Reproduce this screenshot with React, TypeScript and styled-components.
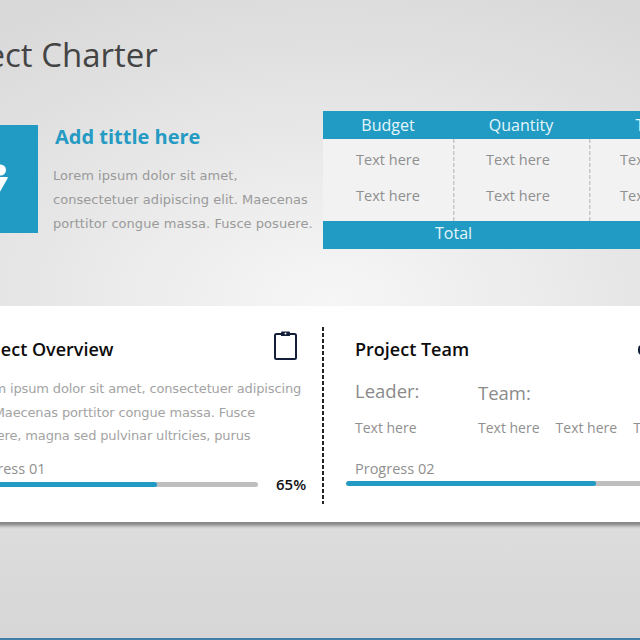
import React from "react";
import styled, { createGlobalStyle } from "styled-components";

const GlobalStyle = createGlobalStyle`
  html, body {
    margin: 0;
    padding: 0;
    background: #dcdcdc;
  }
`;

function ClipboardIcon() {
  return (
    <svg width="26" height="30" viewBox="0 0 26 30" fill="none">
      <rect x="3" y="4" width="21" height="25" rx="1.5" stroke="#14203a" strokeWidth="2" />
      <path d="M9 6V2.800C9 2 9.600 1.500 10.400 1.500h6.200c.8 0 1.400.5 1.400 1.300V6z" fill="#14203a" />
      <circle cx="13.500" cy="3.500" r="1" fill="#fff" />
    </svg>
  );
}

function BlockIcon() {
  return (
    <svg width="40" height="50" viewBox="0 0 40 50" fill="#fff">
      <circle cx="32.500" cy="13" r="5.500" />
      <path d="M12 20h27c.6 0 1 .6.8 1.100L29 40l-3-13-6-7z" />
    </svg>
  );
}

function App() {
  return (
    <Page>
      <GlobalStyle />
      <Title>Project Charter</Title>
      <TopRow>
        <IconBlock>
          <BlockIcon />
        </IconBlock>
        <Intro>
          <IntroTitle>Add tittle here</IntroTitle>
          <IntroText>
            Lorem ipsum dolor sit amet,
            <br />
            consectetuer adipiscing elit. Maecenas
            <br />
            porttitor congue massa. Fusce posuere.
          </IntroText>
        </Intro>
        <Table>
          <HeadRow>
            <HeadCell $width={130}>Budget</HeadCell>
            <HeadCell $width={136}>Quantity</HeadCell>
            <HeadCell $width={130}>Total</HeadCell>
          </HeadRow>
          <BodyRow>
            <BodyCell $width={130}>
              <CellText>Text here</CellText>
              <CellText>Text here</CellText>
            </BodyCell>
            <BodyCell $width={136} $divider $inset={6}>
              <CellText>Text here</CellText>
              <CellText>Text here</CellText>
            </BodyCell>
            <BodyCell $width={130} $divider $inset={4}>
              <CellText>Text here</CellText>
              <CellText>Text here</CellText>
            </BodyCell>
          </BodyRow>
          <TotalRow>Total</TotalRow>
        </Table>
      </TopRow>
      <Card>
        <Column $width={362} $inset={6}>
          <ColumnHead>
            <Heading>Project Overview</Heading>
            <ClipboardIcon />
          </ColumnHead>
          <Paragraph>
            Lorem ipsum dolor sit amet, consectetuer adipiscing
            <br />
            elit. Maecenas porttitor congue massa. Fusce
            <br />
            posuere, magna sed pulvinar ultricies, purus
          </Paragraph>
          <ProgressLabel>Progress 01</ProgressLabel>
          <ProgressRow>
            <Track $width={289}>
              <Fill $percent={65} />
            </Track>
            <Percent>65%</Percent>
          </ProgressRow>
        </Column>
        <Divider />
        <Column $width={420} $inset={31}>
          <ColumnHead>
            <Heading>Project Team</Heading>
            <TeamDot />
          </ColumnHead>
          <TeamGrid>
            <TeamBlock $width={123}>
              <TeamLabel>Leader:</TeamLabel>
              <TeamText>Text here</TeamText>
            </TeamBlock>
            <TeamBlock>
              <TeamLabel $low>Team:</TeamLabel>
              <TeamNames>
                <TeamText>Text here</TeamText>
                <TeamText>Text here</TeamText>
                <TeamText>Text here</TeamText>
              </TeamNames>
            </TeamBlock>
          </TeamGrid>
          <ProgressLabel>Progress 02</ProgressLabel>
          <WideTrack>
            <Fill $percent={62} />
          </WideTrack>
        </Column>
      </Card>
      <BottomLine />
    </Page>
  );
}

const Page = styled.div`
  position: relative;
  width: 640px;
  height: 640px;
  overflow: hidden;
  display: flex;
  flex-direction: column;
  background:
    linear-gradient(#dddddd, #d6d6d6) 0 522px / 100% 118px no-repeat,
    radial-gradient(
      ellipse 560px 340px at 330px 300px,
      #f6f6f6 0%,
      #ececec 35%,
      #e0e0e0 75%,
      #d9d9d9 100%
    );
  font-family: "Noto Sans", "Open Sans", sans-serif;
`;

const Title = styled.h1`
  margin: 32px 0 0 -75px;
  font-family: "Open Sans", "Noto Sans", sans-serif;
  font-size: 33px;
  line-height: 45px;
  font-weight: 400;
  color: #444;
  white-space: nowrap;
`;

const TopRow = styled.div`
  display: flex;
  align-items: flex-start;
  margin: 34px 0 0 -70px;
  width: 900px;
`;

const IconBlock = styled.div`
  flex: none;
  width: 108px;
  height: 108px;
  margin-top: 14px;
  background: #229bc4;
  display: flex;
  align-items: center;
  justify-content: center;
  svg {
    margin: 6px 0 0 7px;
  }
`;

const Intro = styled.div`
  flex: none;
  width: 270px;
  margin-left: 15px;
  margin-top: 14px;
`;

const IntroTitle = styled.h2`
  margin: 0 0 0 2px;
  font-family: "Open Sans", sans-serif;
  font-size: 20px;
  line-height: 24px;
  font-weight: 700;
  color: #259bc3;
  white-space: nowrap;
`;

const IntroText = styled.p`
  margin: 15px 0 0;
  font-family: "DejaVu Sans", sans-serif;
  font-size: 13px;
  line-height: 23.800px;
  color: #9a9a9a;
  letter-spacing: 0.05px;
  white-space: nowrap;
`;

const Table = styled.div`
  flex: none;
  width: 420px;
  display: flex;
  flex-direction: column;
  color: #fff;
`;

const HeadRow = styled.div`
  display: flex;
  height: 28px;
  background: #229bc4;
`;

const HeadCell = styled.div<{ $width: number }>`
  flex: none;
  width: ${(p) => p.$width}px;
  text-align: center;
  font-family: "Open Sans", sans-serif;
  font-size: 16px;
  line-height: 29px;
  color: #e4f6fb;
`;

const BodyRow = styled.div`
  display: flex;
  height: 82px;
  background: #f2f2f3;
`;

const BodyCell = styled.div<{ $width: number; $divider?: boolean; $inset?: number }>`
  flex: none;
  box-sizing: border-box;
  width: ${(p) => p.$width}px;
  padding: 9px ${(p) => p.$inset ?? 0}px 0 0;
  display: flex;
  flex-direction: column;
  gap: 12px;
  align-items: center;
  background: ${(p) =>
    p.$divider
      ? "repeating-linear-gradient(#c8c8c8 0 4px, transparent 4px 6px) left top / 1.500px 100% no-repeat"
      : "none"};
`;

const CellText = styled.div`
  font-family: "Open Sans", sans-serif;
  font-size: 14.500px;
  line-height: 24px;
  color: #8f8f8f;
  white-space: nowrap;
`;

const TotalRow = styled.div`
  height: 28px;
  background: #229bc4;
  padding-left: 112px;
  font-family: "Open Sans", sans-serif;
  font-size: 16px;
  line-height: 25px;
  color: #e4f6fb;
`;

const Card = styled.div`
  flex: none;
  display: flex;
  align-items: flex-start;
  width: 820px;
  height: 216px;
  margin: 57px 0 0 -40px;
  background: #fff;
  box-shadow: 0 2px 1px #8a8a8a, 0 4px 3px rgba(90, 90, 90, 0.6);
`;

const Column = styled.div<{ $width: number; $inset: number }>`
  flex: none;
  box-sizing: border-box;
  width: ${(p) => p.$width}px;
  padding-left: ${(p) => p.$inset}px;
  padding-top: 24px;
`;

const ColumnHead = styled.div`
  display: flex;
  justify-content: space-between;
  align-items: flex-start;
  height: 41px;
  padding-right: 24px;
`;

const Heading = styled.h3`
  margin: 6px 0 0;
  font-family: "Open Sans", sans-serif;
  font-size: 18px;
  line-height: 26px;
  font-weight: 600;
  color: #0c0c0c;
  white-space: nowrap;
`;

const Paragraph = styled.p`
  margin: 6px 0 0;
  font-family: "DejaVu Sans", sans-serif;
  font-size: 13px;
  line-height: 23.500px;
  color: #a3a3a3;
  letter-spacing: -0.14px;
  white-space: nowrap;
`;

const ProgressLabel = styled.div`
  margin-top: 13px;
  font-family: "Open Sans", sans-serif;
  font-size: 14.500px;
  line-height: 16px;
  color: #8f8f8f;
  white-space: nowrap;
`;

const ProgressRow = styled.div`
  display: flex;
  align-items: center;
  margin: -2px 0 0 3px;
`;

const Track = styled.div<{ $width: number }>`
  flex: none;
  width: ${(p) => p.$width}px;
  height: 5px;
  border-radius: 3px;
  background: #bebebe;
  overflow: hidden;
`;

const WideTrack = styled.div`
  width: 403px;
  height: 5px;
  margin: 4px 0 0 -9px;
  border-radius: 3px;
  background: #bebebe;
  overflow: hidden;
`;

const Fill = styled.div<{ $percent: number }>`
  width: ${(p) => p.$percent}%;
  height: 100%;
  border-radius: 3px;
  background: #229bc4;
`;

const Percent = styled.span`
  margin-left: 18px;
  font-family: "Open Sans", sans-serif;
  font-size: 15px;
  line-height: 20px;
  font-weight: 600;
  color: #111;
  position: relative;
  top: -1px;
`;

const Divider = styled.div`
  flex: none;
  width: 2px;
  height: 177px;
  margin-top: 21px;
  background: repeating-linear-gradient(#222 0 4px, transparent 4px 6px);
`;

const TeamDot = styled.div`
  width: 8px;
  height: 10px;
  margin: 15px 74px 0 0;
  border-radius: 4px;
  background: #14203a;
`;

const TeamGrid = styled.div`
  display: flex;
  margin: 8px 0 22px;
`;

const TeamBlock = styled.div<{ $width?: number }>`
  flex: ${(p) => (p.$width ? "none" : "1")};
  width: ${(p) => (p.$width ? `${p.$width}px` : "auto")};
`;

const TeamLabel = styled.div<{ $low?: boolean }>`
  margin-top: ${(p) => (p.$low ? "2px" : "0")};
  margin-bottom: ${(p) => (p.$low ? "12px" : "14px")};
  font-family: "Open Sans", sans-serif;
  font-size: 18.500px;
  line-height: 24px;
  color: #8a8a8a;
`;

const TeamNames = styled.div`
  display: flex;
  gap: 16px;
`;

const TeamText = styled.div`
  font-family: "Open Sans", sans-serif;
  font-size: 14px;
  line-height: 22px;
  color: #8f8f8f;
  white-space: nowrap;
`;

const BottomLine = styled.div`
  position: absolute;
  left: 0;
  right: 0;
  bottom: 0;
  height: 2px;
  background: #427ea6;
`;

export default App;
